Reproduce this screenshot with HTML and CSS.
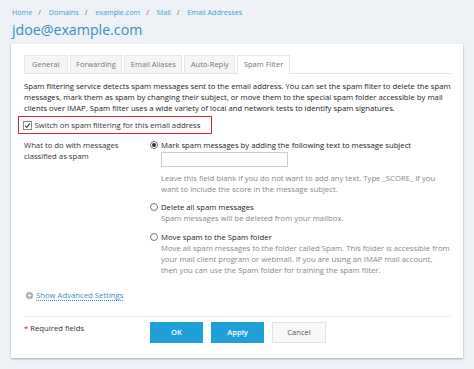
FILE: index.html
```html
<!DOCTYPE html>
<html lang="en">
<head>
    <meta charset="UTF-8">
    <meta name="viewport" content="width=device-width, initial-scale=1.0">
    <title>jdoe@example.com - Spam Filter</title>
    <link rel="stylesheet" href="styles.css">
</head>
<body>
    <div class="page">
        <div class="breadcrumb">
            <a href="#">Home</a><span class="sep">/</span>
            <a href="#">Domains</a><span class="sep">/</span>
            <a href="#">example.com</a><span class="sep">/</span>
            <a href="#">Mail</a><span class="sep">/</span>
            <a href="#">Email Addresses</a>
        </div>
        <h1 class="title">jdoe@example.com</h1>

        <div class="card">
            <div class="tabs">
                <div class="tab">General</div>
                <div class="tab">Forwarding</div>
                <div class="tab">Email Aliases</div>
                <div class="tab">Auto-Reply</div>
                <div class="tab active">Spam Filter</div>
            </div>

            <p class="intro">Spam filtering service detects spam messages sent to the email address. You can set the spam filter to delete the spam messages, mark them as spam by changing their subject, or move them to the special spam folder accessible by mail clients over IMAP. Spam filter uses a wide variety of local and network tests to identify spam signatures.</p>

            <div class="switch-row">
                <span class="checkbox">
                    <svg width="9" height="9" viewBox="0 0 9 9"><rect x="0.5" y="0.5" width="8" height="8" fill="#fff" stroke="#8a8a8a"/><path d="M2 4.6 L3.8 6.4 L7 2.4" fill="none" stroke="#444" stroke-width="1.1"/></svg>
                </span>
                <span>Switch on spam filtering for this email address</span>
            </div>

            <div class="field">
                <div class="field-label">What to do with messages classified as spam</div>
                <div class="field-body">
                    <div class="option first">
                        <div class="option-title"><span class="radio checked"></span>Mark spam messages by adding the following text to message subject</div>
                        <input class="text-input" type="text">
                        <div class="hint">Leave this field blank if you do not want to add any text. Type _SCORE_ if you want to include the score in the message subject.</div>
                    </div>
                    <div class="option">
                        <div class="option-title"><span class="radio"></span>Delete all spam messages</div>
                        <div class="hint">Spam messages will be deleted from your mailbox.</div>
                    </div>
                    <div class="option">
                        <div class="option-title"><span class="radio"></span>Move spam to the Spam folder</div>
                        <div class="hint">Move all spam messages to the folder called Spam. This folder is accessible from your mail client program or webmail. If you are using an IMAP mail account,<br>then you can use the Spam folder for training the spam filter.</div>
                    </div>
                </div>
            </div>

            <div class="advanced">
                <span class="plus-icon">
                    <svg width="7" height="7" viewBox="0 0 7 7"><circle cx="3.5" cy="3.5" r="3.5" fill="#a9adb1"/><path d="M3.5 1.6 V5.4 M1.6 3.5 H5.4" stroke="#fff" stroke-width="1"/></svg>
                </span>
                <a href="#" class="advanced-link">Show Advanced Settings</a>
            </div>

            <div class="footer">
                <div class="required"><span class="star">*</span> Required fields</div>
                <div class="buttons">
                    <button class="btn btn-primary">OK</button>
                    <button class="btn btn-primary">Apply</button>
                    <button class="btn btn-default">Cancel</button>
                </div>
            </div>
        </div>
    </div>
</body>
</html>
```

FILE: styles.css
```css
body {
    font-family: "Open Sans", "Liberation Sans", sans-serif;
    margin: 0;
    padding: 0;
    background-color: #eef1f5;
    color: #333;
}
.page {
    padding: 6px 11px 12px 11px;
}
.breadcrumb {
    font-size: 7.2px;
    line-height: 12px;
    height: 12px;
    padding-left: 1px;
}
.breadcrumb a {
    color: #3aa3d2;
    text-decoration: none;
}
.breadcrumb .sep {
    color: #666;
    margin: 0 6px 0 6px;
}
.title {
    font-size: 14.2px;
    font-weight: normal;
    color: #3b8fc0;
    margin: 2px 0 5px 1px;
    line-height: 19px;
}
.card {
    background-color: white;
    box-shadow: 0 1px 2px rgba(0,0,0,0.3);
    padding: 11px 11px 15px 13px;
    width: 428px;
}
.tabs {
    display: flex;
    gap: 2px;
    border-bottom: 1px solid #e3e5e7;
    height: 18px;
}
.tab {
    font-size: 7.5px;
    line-height: 17px;
    color: #777;
    padding: 0 5.5px;
    background-color: #f4f5f6;
    border: 1px solid #e6e7e8;
    border-bottom: none;
}
.tab:first-child {
    padding: 0 7px;
}
.tab.active {
    background-color: white;
    margin-bottom: -1px;
    height: 18px;
}
.intro {
    font-size: 7.73px;
    line-height: 11px;
    margin: 7px 0 2px 0;
    color: #222;
}
.switch-row {
    display: flex;
    align-items: center;
    gap: 3px;
    font-size: 7.73px;
    color: #333;
    margin-left: -6.5px;
    width: fit-content;
    height: 16px;
    padding: 0 11px 0 4px;
    border: 1.5px solid #d32630;
}
.checkbox {
    display: flex;
    width: 9px;
    height: 9px;
}
.field {
    display: grid;
    grid-template-columns: 126px 1fr;
    margin-top: 5px;
}
.field-label {
    font-size: 7.73px;
    line-height: 10.5px;
    color: #333;
    padding-top: 1px;
    padding-right: 30px;
}
.option {
    margin-bottom: 7px;
}
.option.first {
    margin-bottom: 5px;
}
.option-title {
    display: flex;
    align-items: center;
    font-size: 7.73px;
    line-height: 12px;
    color: #222;
}
.radio {
    display: inline-block;
    width: 6px;
    height: 6px;
    border: 1px solid #777;
    border-radius: 50%;
    margin-right: 3px;
    box-sizing: content-box;
    position: relative;
    background: white;
}
.radio.checked::after {
    content: "";
    position: absolute;
    left: 1px;
    top: 1px;
    width: 4px;
    height: 4px;
    border-radius: 50%;
    background-color: #333;
}
.text-input {
    display: block;
    width: 127px;
    height: 15px;
    box-sizing: border-box;
    border: 1px solid #ccc;
    margin: 1px 0 6px 11px;
    padding: 0;
}
.hint {
    font-size: 7.73px;
    line-height: 11.3px;
    color: #888;
    margin-left: 11px;
}
.advanced {
    display: flex;
    align-items: center;
    gap: 3px;
    font-size: 7.73px;
    margin: 4px 0 0 2px;
    height: 16px;
}
.plus-icon {
    display: flex;
}
.advanced-link {
    color: #3b8fc0;
    text-decoration: none;
    border-bottom: 1px dotted #3b8fc0;
    line-height: 10px;
}
.footer {
    display: grid;
    grid-template-columns: 126px 1fr;
    border-top: 1px solid #eceeef;
    margin-top: 12px;
    padding-top: 5px;
}
.required {
    font-size: 7.73px;
    color: #333;
    padding-top: 1px;
}
.star {
    color: #d32630;
}
.buttons {
    display: flex;
    gap: 8px;
}
.btn {
    width: 53px;
    height: 21px;
    font-family: "Open Sans", "Liberation Sans", sans-serif;
    font-size: 7.6px;
    border: none;
    padding: 0;
    margin: 0;
    cursor: pointer;
}
.btn-primary {
    background-color: #1f9fd8;
    color: white;
    font-weight: 600;
}
.btn-default {
    background-color: #f8f8f8;
    border: 1px solid #e2e2e2;
    color: #555;
    width: 54px;
}
```
